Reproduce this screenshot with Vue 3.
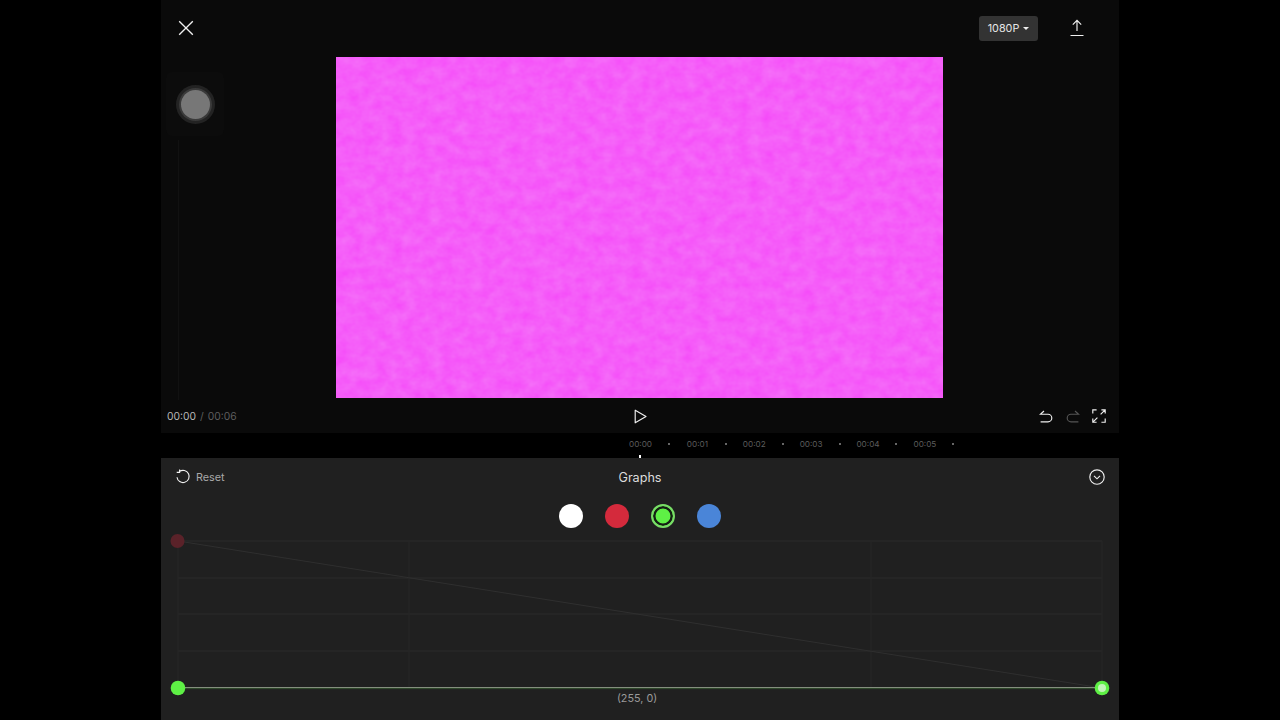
<script setup>
const ticks = ['00:00', '00:01', '00:02', '00:03', '00:04', '00:05']
const swatches = [
  { id: 'white', active: false },
  { id: 'red', active: false },
  { id: 'green', active: true },
  { id: 'blue', active: false },
]
const gridY = [11, 48, 84, 121]
const gridX = [17, 248, 710, 941]
</script>

<template>
  <div class="app">
    <section class="stage">
      <header class="topbar">
        <button class="icon-btn" aria-label="Close">
          <svg width="16" height="16" viewBox="0 0 16 16"><path d="M1.2 1.2 14.8 14.8M14.8 1.2 1.2 14.8" class="ln mid" /></svg>
        </button>
        <div class="top-actions">
          <div class="quality">1080P<span class="caret"></span></div>
          <button class="icon-btn" aria-label="Export">
            <svg width="14" height="18" viewBox="0 0 14 18"><path d="M7 12V1.5M2.8 5.6 7 1.4l4.2 4.2M.5 16.5h13" class="ln thin" /></svg>
          </button>
        </div>
      </header>

      <div class="assist"><span class="assist-dot"></span></div>
      <i class="assist-rail"></i>

      <div class="preview-row">
        <div class="preview">
          <svg class="noise" width="607" height="341" aria-hidden="true">
            <filter id="pink" x="0" y="0" width="100%" height="100%" color-interpolation-filters="sRGB">
              <feTurbulence type="fractalNoise" baseFrequency="0.075 0.09" numOctaves="3" seed="8" />
              <feColorMatrix type="matrix" values="0 0 0 0 0.96  0.17 0 0 0 0.28  0 0 0 0 0.975  0 0 0 0 1" />
              <feGaussianBlur stdDeviation="0.7" />
            </filter>
            <rect width="607" height="341" filter="url(#pink)" />
          </svg>
        </div>
      </div>

      <div class="controls">
        <div class="time"><span class="now">00:00</span><span class="sep">/</span><span class="total">00:06</span></div>
        <button class="icon-btn play" aria-label="Play">
          <svg width="13" height="15" viewBox="0 0 13 15"><path d="M1.2 1.2v12.6L12 7.5z" class="ln thin joined" /></svg>
        </button>
        <div class="tools">
          <svg width="14" height="13" viewBox="0 0 14 13"><path d="M5 1 1.4 4.2H9a3.7 3.7 0 0 1 0 7.6H1.6" class="ln thin" /></svg>
          <svg class="disabled" width="14" height="13" viewBox="0 0 14 13"><path d="M9 1l3.6 3.2H5a3.7 3.7 0 0 0 0 7.6h7.4" class="ln thin" /></svg>
          <svg width="14" height="14" viewBox="0 0 14 14"><path d="M.8 4.6V.8h3.8M9.4 .8h3.8v3.8M13.2 9.4v3.8H9.4M4.6 13.2H.8V9.4M8.6 5.4l4-4M5.4 8.6l-4 4" class="ln thin" /></svg>
        </div>
      </div>
    </section>

    <div class="timeline">
      <template v-for="t in ticks" :key="t">
        <span class="tick">{{ t }}</span>
        <span class="tick"><i class="dot"></i></span>
      </template>
      <i class="playhead"></i>
    </div>

    <section class="panel">
      <header class="panel-head">
        <div class="reset">
          <svg width="16" height="16" viewBox="0 0 16 16"><path d="M4.4 2.6A6.1 6.1 0 1 1 2 8.2M4.6 .4v2.9H1.7" class="ln thin" /></svg>
          <span>Reset</span>
        </div>
        <h2 class="title">Graphs</h2>
        <button class="icon-btn collapse" aria-label="Collapse">
          <svg width="16" height="16" viewBox="0 0 16 16"><circle cx="8" cy="8" r="7.2" class="ln thin" /><path d="M5 6.8 8 9.8l3-3" class="ln thin" /></svg>
        </button>
      </header>

      <div class="swatches">
        <span v-for="s in swatches" :key="s.id" class="swatch" :class="[s.id, { active: s.active }]"></span>
      </div>

      <div class="graph">
        <svg width="958" height="190" viewBox="0 0 958 190">
          <line v-for="y in gridY" :key="'h' + y" x1="17" x2="941" :y1="y" :y2="y" class="grid" />
          <line v-for="x in gridX" :key="'v' + x" :x1="x" :x2="x" y1="11" y2="158" class="grid soft" />
          <line x1="17" y1="11" x2="941" y2="158" class="diag" />
          <line x1="17" x2="941" y1="157.6" y2="157.6" class="curve-top" />
          <line x1="17" x2="941" y1="158.6" y2="158.6" class="curve-low" />
          <circle cx="16.5" cy="11" r="7" class="pt-red" />
          <circle cx="17" cy="158" r="7.3" class="pt-green" />
          <circle cx="941" cy="158" r="7.3" class="pt-green" />
          <circle cx="941" cy="158" r="4" class="pt-inner" />
        </svg>
        <span class="readout">(255, 0)</span>
      </div>
    </section>
  </div>
</template>

<style scoped>
.app {
  width: 958px;
  height: 720px;
  margin-left: 161px;
  display: flex;
  flex-direction: column;
  font-family: Inter, "Liberation Sans", sans-serif;
  color: #e6e6e6;
}
.icon-btn {
  padding: 0;
  border: 0;
  background: none;
  display: flex;
  align-items: center;
  justify-content: center;
}
.ln {
  fill: none;
  stroke: #f0f0f0;
  stroke-width: 1.5;
}
.mid { stroke-width: 1.35; }
.thin { stroke-width: 1.15; }
.joined { stroke-linejoin: round; }
.stage {
  position: relative;
  height: 433px;
  background: #0a0a0a;
  display: flex;
  flex-direction: column;
}
.topbar {
  height: 57px;
  padding: 0 35px 1px 17px;
  box-sizing: border-box;
  display: flex;
  align-items: center;
  justify-content: space-between;
}
.top-actions {
  display: flex;
  align-items: center;
  gap: 32px;
}
.quality {
  width: 59px;
  height: 25px;
  border-radius: 3px;
  background: #333;
  font-size: 10.8px;
  display: flex;
  align-items: center;
  justify-content: center;
  gap: 4px;
}
.caret {
  width: 0;
  height: 0;
  border: 3.5px solid transparent;
  border-top: 3.5px solid #eee;
  border-bottom: 0;
}
.assist {
  position: absolute;
  left: 5px;
  top: 72px;
  width: 58px;
  height: 64px;
  background: #0c0c0c;
  border-radius: 6px;
  display: flex;
  align-items: center;
  justify-content: center;
}
.assist-dot {
  width: 29px;
  height: 29px;
  border-radius: 50%;
  background: #777;
  box-shadow: 0 0 0 2px #3a3a3a, 0 0 0 5px #232323;
}
.assist-rail {
  position: absolute;
  left: 17px;
  top: 140px;
  bottom: 33px;
  width: 1px;
  background: #111;
}
.preview-row {
  display: flex;
  justify-content: center;
  padding-right: 2px;
}
.preview {
  width: 607px;
  height: 341px;
}
.noise { display: block; }
.controls {
  flex: 1;
  display: grid;
  grid-template-columns: 1fr auto 1fr;
  align-items: center;
  padding: 1px 6px 0;
}
.time {
  font-size: 10.3px;
  display: flex;
  gap: 4px;
}
.now { color: #b8b8b8; }
.sep, .total { color: #5e5e5e; }
.tools {
  display: flex;
  justify-content: flex-end;
  align-items: center;
  gap: 12.5px;
  padding-right: 7px;
}
.disabled .ln { stroke: #555; }
.timeline {
  position: relative;
  height: 25px;
  background: #000;
  display: flex;
  align-items: flex-start;
  padding: 4px 0 0 465.3px;
  box-sizing: border-box;
}
.tick {
  flex: 0 0 28.45px;
  height: 13px;
  display: flex;
  align-items: center;
  justify-content: center;
  font-size: 8.2px;
  color: #5c5c5c;
  white-space: nowrap;
}
.dot {
  width: 2px;
  height: 2px;
  border-radius: 50%;
  background: #888;
}
.playhead {
  position: absolute;
  left: 478px;
  bottom: 0;
  width: 2px;
  height: 3px;
  background: #fff;
}
.panel {
  flex: 1;
  background: #202020;
  display: flex;
  flex-direction: column;
}
.panel-head {
  height: 39px;
  padding: 0 14px 1px;
  box-sizing: border-box;
  display: grid;
  grid-template-columns: 1fr auto 1fr;
  align-items: center;
}
.reset {
  display: flex;
  align-items: center;
  gap: 5px;
  font-size: 10.8px;
  color: #a8a8a8;
}
.title {
  margin: 0;
  font-size: 12.6px;
  font-weight: 400;
  color: #dcdcdc;
}
.collapse { justify-self: end; }
.swatches {
  height: 33px;
  padding: 7px 0 0;
  box-sizing: border-box;
  display: flex;
  justify-content: center;
  align-items: flex-start;
  gap: 21.7px;
}
.swatch {
  width: 24px;
  height: 24px;
  border-radius: 50%;
  box-sizing: border-box;
}
.white { background: #fff; }
.red { background: #d42a3c; }
.green { background: #5ef045; }
.green.active {
  border: 2px solid #78dd66;
  background: #5ef045;
  box-shadow: inset 0 0 0 2.5px #142014;
}
.blue { background: #4a85d8; }
.graph {
  position: relative;
  flex: 1;
}
.graph svg { display: block; }
.grid { stroke: #2a2a2a; stroke-width: 1; }
.soft { stroke: #272727; }
.diag { stroke: #2f2f2f; stroke-width: 1; }
.curve-top { stroke: #8f9a88; stroke-width: 1; }
.curve-low { stroke: #2f4a2a; stroke-width: 1; }
.pt-red { fill: #5a2229; }
.pt-green { fill: #5ef045; }
.pt-inner { fill: #c2f5b8; }
.readout {
  position: absolute;
  left: 476px;
  top: 162px;
  width: 0;
  display: flex;
  justify-content: center;
  white-space: nowrap;
  font-size: 10.8px;
  color: #9a9a9a;
}
</style>

<style>
html, body { background: #000; }
</style>
